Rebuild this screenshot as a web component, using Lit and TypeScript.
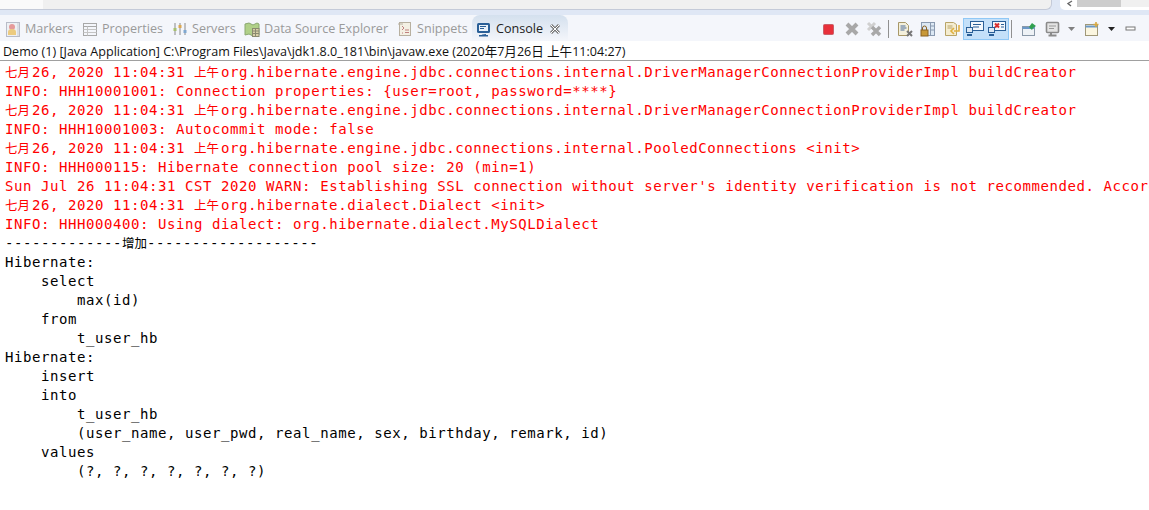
import { LitElement, html, css, svg } from "lit";
import { customElement } from "lit/decorators.js";

const ts = (cls: string) => html`<span class="cjk wide">七月</span>26, 2020 11:04:31 <span class="cjk wide">上午</span>${cls}`;

@customElement("app-root")
export class AppRoot extends LitElement {
  static styles = css`
    :host { display: block; width: 1149px; height: 510px; background: #dfe7f5; overflow: hidden; font-family: "Open Sans", sans-serif; }
    .top { height: 15px; display: flex; gap: 8px; align-items: flex-start; }
    .panel-left { flex: 1; height: 9px; background: #f0f0f0; border-bottom: 1px solid #c4cad8; border-right: 1px solid #c4cad8; border-radius: 0 0 6px 0; display: flex; overflow: hidden; }
    .panel-left .white { width: 43px; background: #fafafa; }
    .panel-right { width: 89px; height: 10px; background: #fff; border-radius: 0 0 0 5px; display: flex; align-items: flex-start; }
    .arrow { margin: 0 0 0 6px; flex: none; }
    .thumb { width: 44px; height: 7px; margin-left: 3px; background: #cdcdcd; }
    .track { flex: 1; height: 7px; background: #f0f0f0; }
    .bar { height: 26px; background: #f4f6fb; display: flex; align-items: center; padding-left: 5px; }
    .tabs { display: flex; align-items: center; flex: 1; height: 100%; }
    .tab { display: flex; align-items: center; gap: 4px; font: 12.6px/20px "Open Sans", sans-serif; color: #9a9a9a; white-space: nowrap; height: 26px; box-sizing: border-box; padding-top: 2px; }
    .tab svg { flex: none; }
    .t1 { width: 77px; }
    .t2 { width: 90px; }
    .t3 { width: 72px; }
    .t4 { width: 153px; }
    .t5 { width: 75px; }
    .tab.on { color: #222; background: linear-gradient(#d4e0ee, #f4f6fb); width: 96px; border-radius: 8px 8px 0 0; padding: 2px 7px 0 4px; gap: 5px; }
    .tab.on .x { margin-left: 1px; }
    .tools { display: flex; align-items: center; height: 100%; padding: 2px 13px 0 0; box-sizing: border-box; }
    .tools svg { display: block; flex: none; }
    .g6 { margin-left: 6px; } .g7 { margin-left: 7px; } .g8 { margin-left: 8px; } .g9 { margin-left: 9px; }
    .sep { width: 1px; height: 18px; background: #909090; }
    .sep.b { margin: 0 9px 0 2px; }
    .pressed { background: #c4e0f9; border: 1px solid #90c8f6; display: flex; height: 20px; margin-left: 3px; }
    .info { font: 12.56px/21px "Open Sans", "Noto Sans CJK SC", sans-serif; height: 19px; padding-left: 3px; color: #111; background: #fff; border-bottom: 1px solid #a0a0a0; white-space: nowrap; }
    .console { background: #fff; height: 449px; padding: 2px 0 0 5px; box-sizing: border-box; font: 14px/19px "DejaVu Sans Mono", monospace; letter-spacing: 0.575px; white-space: pre; overflow: hidden; }
    .line { height: 19px; }
    .err { color: #f00; }
    .out { color: #000; }
    .cjk { font: 12.5px/14px "Noto Sans CJK SC", sans-serif; letter-spacing: 0; }
    .wide { display: inline-block; width: 27px; }
  `;

  private ico(body: unknown, w = 16, h = 16, cls = "") {
    return html`<svg class=${cls} width=${w} height=${h} viewBox="0 0 ${w} ${h}">${body}</svg>`;
  }

  render() {
    const lines = [
      ["err", ts("org.hibernate.engine.jdbc.connections.internal.DriverManagerConnectionProviderImpl buildCreator")],
      ["err", "INFO: HHH10001001: Connection properties: {user=root, password=****}"],
      ["err", ts("org.hibernate.engine.jdbc.connections.internal.DriverManagerConnectionProviderImpl buildCreator")],
      ["err", "INFO: HHH10001003: Autocommit mode: false"],
      ["err", ts("org.hibernate.engine.jdbc.connections.internal.PooledConnections <init>")],
      ["err", "INFO: HHH000115: Hibernate connection pool size: 20 (min=1)"],
      ["err", "Sun Jul 26 11:04:31 CST 2020 WARN: Establishing SSL connection without server's identity verification is not recommended. According to MySQL"],
      ["err", ts("org.hibernate.dialect.Dialect <init>")],
      ["err", "INFO: HHH000400: Using dialect: org.hibernate.dialect.MySQLDialect"],
      ["out", html`-------------<span class="cjk">增加</span>-------------------`],
      ["out", "Hibernate:"],
      ["out", "    select"],
      ["out", "        max(id)"],
      ["out", "    from"],
      ["out", "        t_user_hb"],
      ["out", "Hibernate:"],
      ["out", "    insert"],
      ["out", "    into"],
      ["out", "        t_user_hb"],
      ["out", "        (user_name, user_pwd, real_name, sex, birthday, remark, id)"],
      ["out", "    values"],
      ["out", "        (?, ?, ?, ?, ?, ?, ?)"],
    ] as [string, unknown][];
    return html`
      <div class="top">
        <div class="panel-left"><div class="white"></div></div>
        <div class="panel-right">
          ${this.ico(svg`<path d="M6 1L2 3.5 5 6" stroke="#666" stroke-width="1.4" fill="none"/>`, 8, 7, "arrow")}
          <div class="thumb"></div><div class="track"></div>
        </div>
      </div>
      <div class="bar">
        <div class="tabs">
          <div class="tab t1">${this.ico(svg`<rect x="1.5" y="1.5" width="13" height="14" fill="#eef0f4" stroke="#b8bcc8"/><circle cx="7" cy="6" r="3" fill="#e59a9a"/><path d="M3 14v-3a4 3 0 0 1 8 0v3z" fill="#eccb80"/><path d="M13 2v13" stroke="#c8ccd4"/>`)}Markers</div>
          <div class="tab t2">${this.ico(svg`<rect x="1.5" y="2.5" width="13" height="12" fill="#f4f6fb" stroke="#a8a8a8"/><path d="M1.5 5.5h13" stroke="#a8a8a8"/><path d="M1.5 8.5h13M1.5 11.5h13M5.5 5.5v9" stroke="#c4c4c4" fill="none"/>`)}Properties</div>
          <div class="tab t3">${this.ico(svg`<path d="M3 2v12M8 2v12M13 2v12" stroke="#8a8a8a"/><rect x="1.5" y="7" width="3" height="3" fill="#a8c070"/><rect x="6.5" y="4" width="3" height="3" fill="#dda850"/><rect x="11.5" y="9" width="3" height="3" fill="#80a8d0"/>`)}Servers</div>
          <div class="tab t4">${this.ico(svg`<path d="M1 3l4-1 4 2 4-2 2 1v11l-6 1-4-2-4 1z" fill="#b0d088" stroke="#8aa870"/><rect x="8.5" y="7.5" width="6.5" height="8" fill="#d8d0a8" stroke="#8a8a70"/><path d="M8.5 10h6.5M8.5 12.5h6.5M11.5 7.5v8" stroke="#8a8a70"/>`)}Data Source Explorer</div>
          <div class="tab t5">${this.ico(svg`<rect x="2.5" y="1.5" width="11" height="13" fill="#f4f0e4" stroke="#b8b0a0"/><path d="M1 3h5" stroke="#b8b0a0"/><path d="M5 5l2 2-2 2" stroke="#c08080" fill="none"/><path d="M8 9h4M8 11.5h4M5 12h1" stroke="#c08080"/>`)}Snippets</div>
          <div class="tab on">${this.ico(svg`<rect x="1" y="2" width="13" height="10" rx="1.5" fill="#2a5f97"/><rect x="3" y="4" width="9" height="6" fill="#eaf2fa"/><path d="M4 5.5h6M4 7.5h4" stroke="#2a5f97"/><path d="M5 13h5v1H3v1.4h9V14" fill="#2a5f97"/>`, 15, 16)}Console
            ${this.ico(svg`<path d="M2 2l8 8M10 2l-8 8" stroke="#777" stroke-width="3" fill="none"/><path d="M2 2l8 8M10 2l-8 8" stroke="#fff" stroke-width="1" fill="none"/>`, 12, 12, "x")}</div>
        </div>
        <div class="tools">
          ${this.ico(svg`<rect x="2.5" y="3.5" width="10" height="10" rx="1" fill="#e8303a" stroke="#c86068"/>`, 14, 16)}
          ${this.ico(svg`<path d="M3 3l10 10M13 3L3 13" stroke="#a8a8a8" stroke-width="4" fill="none"/>`, 16, 16, "g9")}
          ${this.ico(svg`<path d="M2 2l7 7M9 2L2 9" stroke="#d0d0d0" stroke-width="3" fill="none"/><path d="M6 6l8 8M14 6l-8 8" stroke="#a8a8a8" stroke-width="3.4" fill="none"/>`, 16, 16, "g6")}
          <span class="sep g6"></span>
          ${this.ico(svg`<path d="M1.5 1.5h7l3 3v10h-10z" fill="#f4f0dc" stroke="#a89868"/><path d="M3.5 5h5M3.5 7h6M3.5 9h4" stroke="#4a6a9a"/><path d="M10 10l5 5M15 10l-5 5" stroke="#777" stroke-width="2"/>`, 16, 16, "g8")}
          ${this.ico(svg`<rect x="1.5" y="1.5" width="13" height="13" fill="#dce8f4" stroke="#8a9ab0"/><path d="M10.5 1.5v13M10.5 5h4M10.5 9h4" stroke="#8a9ab0"/><rect x="1" y="9" width="7" height="6" fill="#c89838" stroke="#8a6020"/><path d="M2.5 9V7a2 2 0 0 1 4 0v2" stroke="#8a6020" fill="none"/>`, 16, 16, "g7")}
          ${this.ico(svg`<path d="M1.5 1.5h8l3 2v11h-11z" fill="#f4ecd0" stroke="#b8a468"/><path d="M3.5 5h5M3.5 7h5" stroke="#b8a468"/><path d="M15 4v6h-5M10 7l-3 3 3 3" stroke="#e0b040" stroke-width="1.6" fill="none"/>`, 16, 16, "g8")}
          <div class="pressed">
            ${this.ico(svg`<rect x="6.5" y="2.5" width="13" height="9" fill="#f4f8fc" stroke="#2a5f97"/><path d="M9 5.5h8M9 8h6" stroke="#2a5f97"/><rect x="2" y="8" width="7" height="6" fill="#2a5f97"/><rect x="3" y="9" width="5" height="4" fill="#dce8f4"/><path d="M3 16h5" stroke="#2a5f97" stroke-width="2"/>`, 22, 18)}
            ${this.ico(svg`<rect x="6.5" y="2.5" width="13" height="9" fill="#f4f8fc" stroke="#2a5f97"/><path d="M9 4.5l4 4M13 4.5l-4 4" stroke="#d83030" stroke-width="2"/><path d="M15 5.5h3M15 8h3" stroke="#2a5f97"/><rect x="2" y="8" width="7" height="6" fill="#2a5f97"/><rect x="3" y="9" width="5" height="4" fill="#dce8f4"/><path d="M3 16h5" stroke="#2a5f97" stroke-width="2"/>`, 22, 18)}
          </div>
          <span class="sep b"></span>
          ${this.ico(svg`<rect x="1.5" y="5.5" width="12" height="9" fill="#eef2f6" stroke="#8a98a8"/><path d="M1.5 7h12" stroke="#6a98c8" stroke-width="2"/><path d="M8 6l3-4 4 3-3 2-1 2z" fill="#30a050"/>`)}
          ${this.ico(svg`<rect x="1.5" y="1.5" width="12" height="10" rx="1" fill="#e4e4e4" stroke="#8a8a8a" stroke-width="1.6"/><path d="M4 5h7M4 7.5h5" stroke="#999"/><path d="M6 12v2M3.5 14.5h8" stroke="#8a8a8a" stroke-width="2"/>`, 16, 16, "g8")}
          ${this.ico(svg`<path d="M1 1h7L4.5 5z" fill="#808080"/>`, 9, 6, "g6")}
          ${this.ico(svg`<rect x="1.5" y="3.5" width="12" height="11" fill="#fbf6e0" stroke="#a09878"/><path d="M1.5 5.5h12" stroke="#6a98c8" stroke-width="2"/><path d="M12 1v5M9.5 3.5h5" stroke="#d8a840" stroke-width="1.6"/>`, 16, 16, "g8")}
          ${this.ico(svg`<path d="M1 1h7L4.5 5z" fill="#222"/>`, 9, 6, "g7")}
          ${this.ico(svg`<rect x="1" y="1" width="9" height="3" fill="#fff" stroke="#777"/>`, 11, 6, "g9")}
        </div>
      </div>
      <div class="info">Demo (1) [Java Application] C:\\Program Files\\Java\\jdk1.8.0_181\\bin\\javaw.exe (2020年7月26日 上午11:04:27)</div>
      <div class="console">${lines.map(([c, t]) => html`<div class="line ${c}">${t}</div>`)}</div>
    `;
  }
}
